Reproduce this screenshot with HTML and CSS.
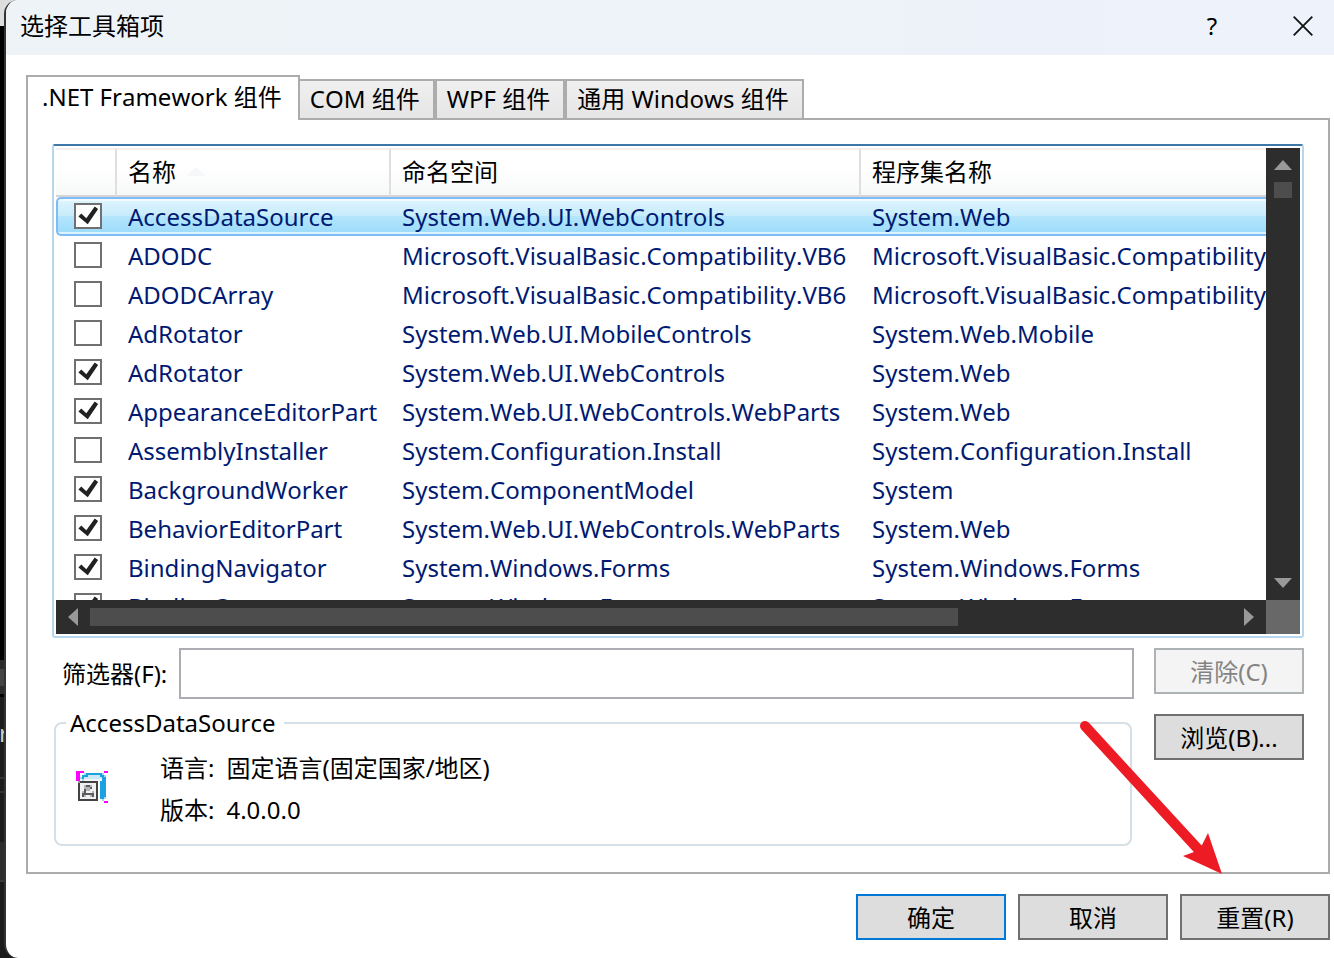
FILE: index.html
```html
<!DOCTYPE html>
<html lang="zh-CN">
<head>
<meta charset="utf-8">
<title>选择工具箱项</title>
<link rel="stylesheet" href="styles.css">
</head>
<body>
<div class="backdrop" aria-hidden="true"><span class="backdrop-text">r</span></div>
<div class="dialog" role="dialog" aria-labelledby="dialog-title">
  <header class="titlebar">
    <h1 class="title" id="dialog-title">选择工具箱项</h1>
    <button class="caption-button caption-help" type="button" aria-label="帮助">?</button>
    <button class="caption-button" type="button" aria-label="关闭">
      <svg width="20" height="20" viewBox="0 0 20 20"><path d="M.7.7l18.6 18.6M19.3.7L.7 19.3" fill="none" stroke="#111" stroke-width="1.8"/></svg>
    </button>
  </header>

  <main class="content">
    <div class="tabs" role="tablist">
      <button class="tab tab-active" type="button" role="tab" aria-selected="true">.NET Framework 组件</button>
      <button class="tab" type="button" role="tab">COM 组件</button>
      <button class="tab" type="button" role="tab">WPF 组件</button>
      <button class="tab" type="button" role="tab">通用 Windows 组件</button>
    </div>

    <section class="panel" role="tabpanel">
      <div class="list">
        <div class="list-view">
          <table class="items">
            <colgroup><col class="col-check"><col class="col-name"><col class="col-space"><col class="col-assembly"></colgroup>
            <thead>
              <tr><th></th><th>名称<span class="sort-mark"></span></th><th>命名空间</th><th>程序集名称</th></tr>
            </thead>
            <tbody>
              <tr class="selected"><td><input class="check" type="checkbox" aria-label="AccessDataSource" checked></td><td>AccessDataSource</td><td>System.Web.UI.WebControls</td><td>System.Web</td></tr>
              <tr><td><input class="check" type="checkbox" aria-label="ADODC"></td><td>ADODC</td><td>Microsoft.VisualBasic.Compatibility.VB6</td><td>Microsoft.VisualBasic.Compatibility</td></tr>
              <tr><td><input class="check" type="checkbox" aria-label="ADODCArray"></td><td>ADODCArray</td><td>Microsoft.VisualBasic.Compatibility.VB6</td><td>Microsoft.VisualBasic.Compatibility</td></tr>
              <tr><td><input class="check" type="checkbox" aria-label="AdRotator"></td><td>AdRotator</td><td>System.Web.UI.MobileControls</td><td>System.Web.Mobile</td></tr>
              <tr><td><input class="check" type="checkbox" aria-label="AdRotator" checked></td><td>AdRotator</td><td>System.Web.UI.WebControls</td><td>System.Web</td></tr>
              <tr><td><input class="check" type="checkbox" aria-label="AppearanceEditorPart" checked></td><td>AppearanceEditorPart</td><td>System.Web.UI.WebControls.WebParts</td><td>System.Web</td></tr>
              <tr><td><input class="check" type="checkbox" aria-label="AssemblyInstaller"></td><td>AssemblyInstaller</td><td>System.Configuration.Install</td><td>System.Configuration.Install</td></tr>
              <tr><td><input class="check" type="checkbox" aria-label="BackgroundWorker" checked></td><td>BackgroundWorker</td><td>System.ComponentModel</td><td>System</td></tr>
              <tr><td><input class="check" type="checkbox" aria-label="BehaviorEditorPart" checked></td><td>BehaviorEditorPart</td><td>System.Web.UI.WebControls.WebParts</td><td>System.Web</td></tr>
              <tr><td><input class="check" type="checkbox" aria-label="BindingNavigator" checked></td><td>BindingNavigator</td><td>System.Windows.Forms</td><td>System.Windows.Forms</td></tr>
              <tr><td><input class="check" type="checkbox" aria-label="BindingSource" checked></td><td>BindingSource</td><td>System.Windows.Forms</td><td>System.Windows.Forms</td></tr>
            </tbody>
          </table>
        </div>
        <div class="scroll scroll-v">
          <button class="scroll-button" type="button" aria-label="向上"><svg width="18" height="10" viewBox="0 0 18 10"><path d="M0 10L9 0l9 10z" fill="#999"/></svg></button>
          <div class="track"><div class="thumb thumb-v"></div></div>
          <button class="scroll-button" type="button" aria-label="向下"><svg width="18" height="10" viewBox="0 0 18 10"><path d="M0 0l9 10 9-10z" fill="#999"/></svg></button>
        </div>
        <div class="scroll scroll-h">
          <button class="scroll-button" type="button" aria-label="向左"><svg width="10" height="18" viewBox="0 0 10 18"><path d="M10 0L0 9l10 9z" fill="#999"/></svg></button>
          <div class="track"><div class="thumb thumb-h"></div></div>
          <button class="scroll-button" type="button" aria-label="向右"><svg width="10" height="18" viewBox="0 0 10 18"><path d="M0 0l10 9-10 9z" fill="#999"/></svg></button>
        </div>
        <div class="scroll-corner"></div>
      </div>

      <div class="lower">
        <div class="details">
          <div class="filter">
            <label for="filter">筛选器(F):</label>
            <input class="filter-input" id="filter" type="text">
          </div>
          <fieldset class="group">
            <legend>AccessDataSource</legend>
            <svg class="item-icon" width="32" height="32" viewBox="0 0 16 16" shape-rendering="crispEdges">
              <path d="M0 0h4v1H2v4H0zM14 0h2v1h-2zM14 15h2v1h-2z" fill="#f0f"/>
              <path d="M4 1h1v1H4zM13 1h1v1h-1zM14 2h1v1h-1zM3 4h1v1H3zM13 14h1v1h-1zM14 13h1v1h-1zM2 3h1v1H2z" fill="#a5d8f0"/>
              <path d="M5 1h8v1H5zM3 2h3v1H3zM12 2h2v1h-2zM3 3h1v1H3zM13 3h2v10h-1v1h-2V5h1z" fill="#1ba1e2"/>
              <path d="M6 2h6v1H6zM4 3h9v1H4z" fill="#cde7f4"/>
              <path d="M4 4h8v1H4z" fill="#eef4f8"/>
              <path d="M1 5h10v10H1z" fill="#424242"/>
              <path d="M2 6h8v8H2z" fill="#f0eff1"/>
              <path d="M1 5h1v1H1z" fill="#999"/>
              <path d="M4 7h1v2H4zM7 7h1v2H7zM5 8h2v2H5zM3 10h1v1H3zM8 10h1v1H8zM4 12h1v1H4zM7 12h1v1H7z" fill="#b5b5b5"/>
              <path d="M5 7h2v1H5zM4 9h1v2h3V9H7V8h1v2h0v2H4v1H3v-2h1zM8 11h1v2H8z" fill="#5c5c5c"/>
            </svg>
            <dl class="facts">
              <dt>语言:</dt><dd>固定语言(固定国家/地区)</dd>
              <dt>版本:</dt><dd>4.0.0.0</dd>
            </dl>
          </fieldset>
        </div>
        <div class="side-buttons">
          <button class="button" type="button" disabled>清除(C)</button>
          <button class="button" type="button">浏览(B)...</button>
        </div>
      </div>
    </section>
  </main>

  <footer class="footer">
    <button class="button button-default" type="button">确定</button>
    <button class="button" type="button">取消</button>
    <button class="button" type="button">重置(R)</button>
  </footer>

  <svg class="pointer" width="146" height="158" viewBox="0 0 146 158" aria-hidden="true">
    <path d="M7 8l113 123" fill="none" stroke="#ed1c24" stroke-width="10" stroke-linecap="round"/>
    <path d="M144 156l-14-41-6 12-8 7-11 4z" fill="#ed1c24"/>
  </svg>
</div>
</body>
</html>
```
FILE: styles.css
```css
* { box-sizing: border-box; }

body {
  margin: 0;
  height: 100vh;
  overflow: hidden;
  position: relative;
  background: #1e1e1e;
  color: #000;
  font: 24px/32px "Noto Sans", "Noto Sans CJK SC", sans-serif;
  font-kerning: none;
}

button, input { font: inherit; font-kerning: inherit; color: inherit; }

.backdrop {
  position: absolute;
  inset: 0 auto 0 0;
  width: 24px;
  overflow: hidden;
  background: linear-gradient(#ddd 26px, #000 26px, #000 660px, #2b2b2b 660px, #2b2b2b 669px, #444 669px, #444 686px, #2b2b2b 686px, #2b2b2b 694px, #000 694px, #000 697px, #1c1c1c 697px, #1c1c1c 777px, #333 777px, #333 779px, #1c1c1c 779px, #1c1c1c 791px, #333 791px, #333 793px, #1c1c1c 793px, #1c1c1c 842px, #2d2d2d 842px, #2d2d2d 880px, #3a3a3a 880px, #3a3a3a 882px, #1c1c1c 882px);
}

.backdrop-text {
  position: absolute;
  top: 717px;
  left: -1px;
  color: #ccc;
}

.dialog {
  position: relative;
  display: flex;
  flex-direction: column;
  height: 100vh;
  margin-left: 4px;
  border-left: 2px solid #333;
  border-radius: 14px 0 0 14px;
  overflow: hidden;
  background: #fff;
}

.titlebar {
  display: flex;
  align-items: center;
  height: 55px;
  padding: 0 0 4px 14px;
  background: linear-gradient(90deg, #eef3f7, #edf2fb);
}

.title {
  flex: 1;
  margin: 0;
  font-size: 24px;
  font-weight: 400;
}

.caption-button {
  display: flex;
  align-items: center;
  justify-content: center;
  width: 62px;
  height: 50px;
  padding: 0;
  border: 0;
  background: none;
}

.caption-help { width: 120px; }

.content {
  flex: 1;
  min-height: 0;
  display: flex;
  flex-direction: column;
  padding: 20px 4px 0 20px;
}

.tabs {
  display: flex;
  align-items: flex-end;
  margin-bottom: -2px;
  position: relative;
}

.tab {
  height: 41px;
  padding: 0 13px 2px 10px;
  border: 2px solid #acacac;
  background: linear-gradient(#f0f0f0, #e5e5e5);
  line-height: 34px;
  white-space: nowrap;
}

.tab-active {
  height: 45px;
  margin-right: -2px;
  padding: 0 16px 4px 14px;
  border-bottom: 0;
  background: #fff;
  position: relative;
  z-index: 1;
}

.panel {
  flex: 1;
  min-height: 0;
  display: flex;
  flex-direction: column;
  gap: 10px;
  padding: 24px 24px 26px;
  border: 2px solid #acacac;
}

.list {
  flex: 1;
  min-height: 0;
  display: grid;
  grid-template: minmax(0, 1fr) 34px / minmax(0, 1fr) 34px;
  padding: 2px;
  border: 2px solid #b7d8ec;
  border-top-color: #3e78a8;
  border-radius: 3px;
}

.list-view { overflow: hidden; }

.items {
  width: 1540px;
  table-layout: fixed;
  border-collapse: separate;
  border-spacing: 0;
}

.col-check { width: 61px; }
.col-name { width: 274px; }
.col-space { width: 470px; }

.items th {
  height: 49px;
  padding: 0 0 2px 11px;
  border-top: 2px solid #f1f1f1;
  border-right: 2px solid #dfdfdf;
  border-bottom: 2px solid #d5d5d5;
  background: linear-gradient(#fff 40%, #f7f8f8);
  font-weight: 400;
  text-align: left;
}

.items td {
  height: 39px;
  padding: 0 0 0 11px;
  border: solid transparent;
  border-width: 2px 0;
  color: #001a72;
  white-space: nowrap;
}

.items td:first-child { padding-left: 18px; }

.items .selected td {
  border-color: #7dbcf5;
  background: linear-gradient(#f0faff 2px, #dcf4fe 2px, #c6ebfc 50%, #b4e5fd 50%, #9eddfb 33px, #dcf3fd 33px);
}

.items .selected td:first-child {
  padding-left: 16px;
  border-left-width: 2px;
  border-radius: 5px 0 0 5px;
}

.sort-mark {
  display: inline-block;
  margin: 0 0 6px 10px;
  border: solid transparent;
  border-width: 0 10px 9px;
  border-bottom-color: #f5f7f8;
  vertical-align: middle;
}

.check {
  display: block;
  width: 28px;
  height: 26px;
  margin: 0 0 2px;
  appearance: none;
  border: 2px solid #707070;
  background: #fff;
}

.check:checked::before {
  content: "";
  display: block;
  height: 100%;
  background: #212121;
  clip-path: polygon(10% 55%, 22% 41%, 43% 62%, 78% 9%, 92% 20%, 49% 90%);
}

.scroll {
  display: flex;
  background: #2d2d2d;
}

.scroll-v { flex-direction: column; }

.scroll-button {
  display: flex;
  align-items: center;
  justify-content: center;
  width: 34px;
  height: 34px;
  padding: 0;
  border: 0;
  background: none;
}

.track { flex: 1; }
.scroll-v .track { padding: 0 8px; }
.scroll-h .track { padding: 8px 0; }
.thumb { background: #4d4d4d; }
.thumb-v { height: 16px; }
.thumb-h { width: 76%; height: 18px; }
.scroll-corner { background: #686868; }

.lower {
  display: flex;
  gap: 20px;
}

.details {
  flex: 1;
  display: flex;
  flex-direction: column;
  gap: 8px;
}

.filter {
  display: flex;
  align-items: center;
  gap: 12px;
  padding-left: 10px;
}

.filter-input {
  flex: 1;
  min-width: 0;
  height: 51px;
  padding: 0 6px;
  border: 2px solid #abadb3;
  background: #fff;
}

.group {
  display: flex;
  align-items: center;
  gap: 52px;
  min-width: 0;
  margin: 0 2px;
  padding: 13px 20px 18px;
  border: 2px solid #d5dfe5;
  border-radius: 8px;
}

.group legend {
  padding: 0 8px 0 4px;
  margin-left: -10px;
}

.item-icon { margin-bottom: 4px; }

.facts {
  display: grid;
  grid-template-columns: auto auto;
  gap: 10px 12px;
  margin: 0;
}

.facts dd { margin: 0; }

.side-buttons {
  display: flex;
  flex-direction: column;
  gap: 20px;
}

.button {
  width: 150px;
  height: 46px;
  padding: 2px 0 0;
  border: 2px solid #707070;
  background: #ddd;
  line-height: 40px;
}

.button:disabled {
  border-color: #adb2b5;
  background: #f4f4f4;
  color: #838383;
}

.button-default { border-color: #0078d7; }

.footer {
  display: flex;
  justify-content: flex-end;
  gap: 12px;
  padding: 20px 4px 18px;
}

.pointer {
  position: absolute;
  right: 110px;
  bottom: 82px;
}
```
